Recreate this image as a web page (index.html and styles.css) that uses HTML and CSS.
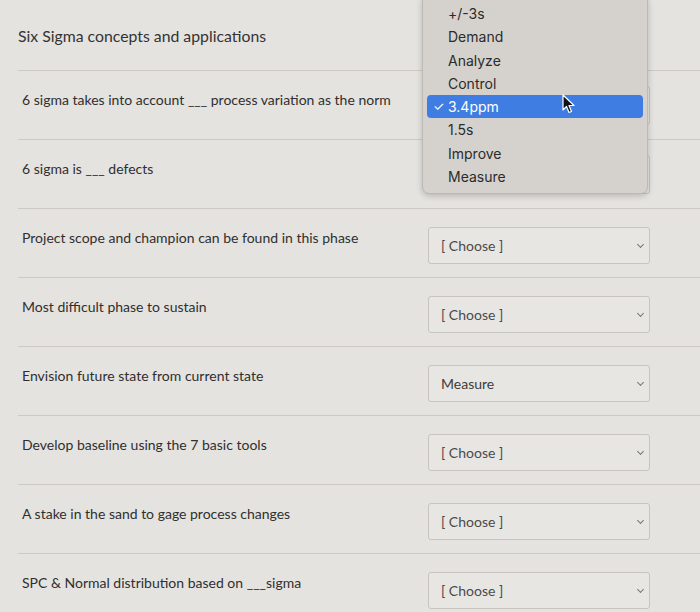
FILE: index.html
```html
<!DOCTYPE html>
<html lang="en">
<head>
    <meta charset="UTF-8">
    <title>Six Sigma concepts and applications</title>
    <link rel="stylesheet" href="styles.css">
</head>
<body>
    <div class="quiz">
        <h1 class="titulo">Six Sigma concepts and applications</h1>

        <div class="fila">
            <p>6 sigma takes into account ___ process variation as the norm</p>
            <div class="caja tapada"><span class="flecha"></span></div>
        </div>
        <div class="fila">
            <p>6 sigma is ___ defects</p>
            <div class="caja tapada"><span class="flecha"></span></div>
        </div>
        <div class="fila">
            <p>Project scope and champion can be found in this phase</p>
            <div class="caja"><span>[ Choose ]</span><span class="flecha"></span></div>
        </div>
        <div class="fila">
            <p>Most difficult phase to sustain</p>
            <div class="caja"><span>[ Choose ]</span><span class="flecha"></span></div>
        </div>
        <div class="fila">
            <p>Envision future state from current state</p>
            <div class="caja"><span class="elegido">Measure</span><span class="flecha"></span></div>
        </div>
        <div class="fila">
            <p>Develop baseline using the 7 basic tools</p>
            <div class="caja"><span>[ Choose ]</span><span class="flecha"></span></div>
        </div>
        <div class="fila">
            <p>A stake in the sand to gage process changes</p>
            <div class="caja"><span>[ Choose ]</span><span class="flecha"></span></div>
        </div>
        <div class="fila">
            <p>SPC &amp; Normal distribution based on ___sigma</p>
            <div class="caja"><span>[ Choose ]</span><span class="flecha"></span></div>
        </div>
    </div>

    <!-- menu abierto del segundo select -->
    <ul class="menu">
        <li>+/-3s</li>
        <li>Demand</li>
        <li>Analyze</li>
        <li>Control</li>
        <li class="activo"><span class="check">&#10003;</span>3.4ppm</li>
        <li>1.5s</li>
        <li>Improve</li>
        <li>Measure</li>
    </ul>

    <svg class="cursor" width="14" height="20" viewBox="0 0 14 20">
        <path d="M1 1 L1 16 L4.5 12.5 L7 18.5 L9.5 17.5 L7 11.5 L12 11.5 Z" fill="#111" stroke="#fff" stroke-width="1.2" stroke-linejoin="round"/>
    </svg>
</body>
</html>
```

FILE: styles.css
```css
body {
    margin: 0;
    padding: 0;
    background-color: #e5e3df;
    font-family: Lato, "Open Sans", sans-serif;
    color: #2d2d2d;
    position: relative;
    overflow: hidden;
}

.quiz {
    padding-left: 18px;
}

.titulo {
    margin: 0;
    height: 70px;
    box-sizing: border-box;
    padding-top: 26px;
    font-size: 15.8px;
    font-weight: normal;
    color: #333;
}

.fila {
    display: grid;
    grid-template-columns: 406px 222px;
    height: 69px;
    box-sizing: border-box;
    border-top: 1px solid #cdcac6;
    padding-left: 4px;
}

.fila p {
    margin: 0;
    padding-top: 20px;
    font-size: 14px;
    color: #2f2f2f;
}

.caja {
    margin-top: 18px;
    height: 37px;
    box-sizing: border-box;
    border: 1px solid #c8c5c1;
    border-radius: 3px;
    background-color: #e8e6e2;
    display: flex;
    align-items: center;
    justify-content: space-between;
    padding: 0 6px 0 12px;
    font-size: 14px;
    color: #4a4a4a;
}

.caja.tapada {
    justify-content: flex-end;
    margin-top: 15px;
    height: 39px;
}

.caja .elegido {
    color: #3c3c3c;
}

.flecha {
    width: 4px;
    height: 4px;
    border-right: 1.5px solid #777;
    border-bottom: 1.5px solid #777;
    transform: rotate(45deg);
    margin-top: -3px;
}

.menu {
    position: absolute;
    left: 422px;
    top: -6px;
    width: 224px;
    margin: 0;
    padding: 7px 0 5px 0;
    list-style: none;
    background-color: #d5d2cd;
    border: 1px solid #bdb9b4;
    border-radius: 7px;
    box-shadow: 0 2px 6px rgba(0, 0, 0, 0.2);
    font-family: Inter, "Liberation Sans", sans-serif;
    font-size: 14px;
    color: #2b2b2b;
    z-index: 2;
}

.menu li {
    height: 23.3px;
    line-height: 23.3px;
    margin: 0 4px 0 4px;
    padding-left: 21px;
    border-radius: 4px;
    position: relative;
}

.menu li.activo {
    background-color: #3f7de2;
    color: #fff;
}

.check {
    position: absolute;
    left: 6px;
    font-size: 13px;
}

.cursor {
    position: absolute;
    left: 562px;
    top: 94px;
    z-index: 3;
}
```
